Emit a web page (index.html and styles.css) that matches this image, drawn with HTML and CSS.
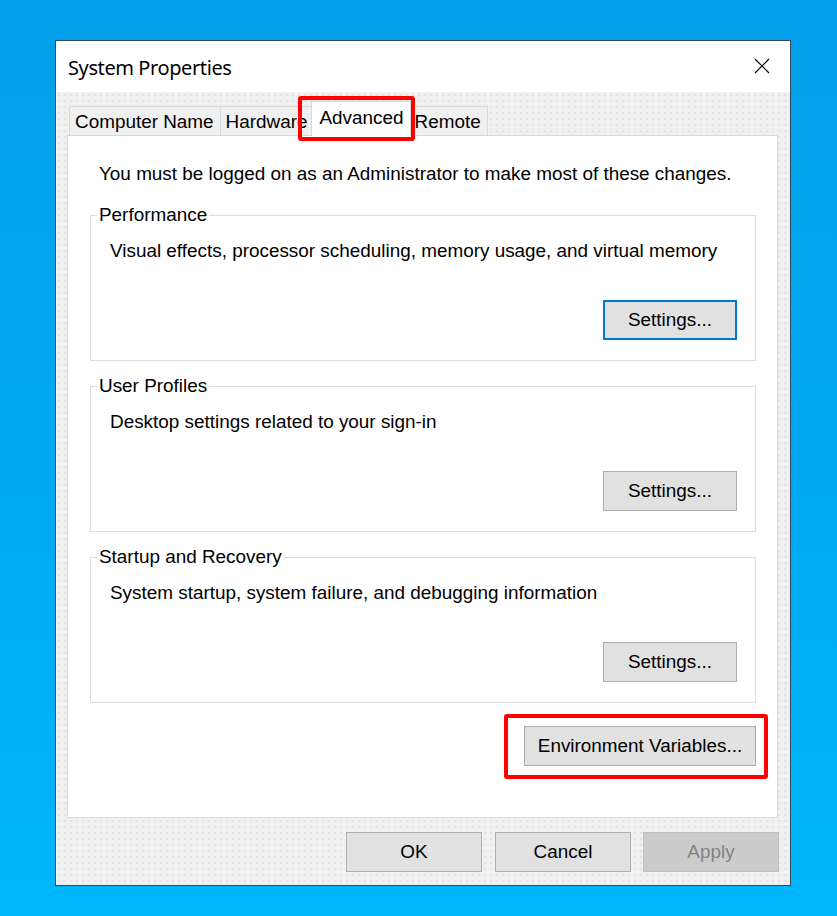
FILE: index.html
```html
<!DOCTYPE html>
<html lang="en">
<head>
<meta charset="utf-8">
<title>System Properties</title>
<link rel="stylesheet" href="styles.css">
</head>
<body>
<div class="desktop">
  <div class="dialog">
    <div class="titlebar">
      <span class="title">System Properties</span>
      <span class="close">
        <svg width="16" height="16" viewBox="0 0 16 16"><path d="M1 1 L15 15 M15 1 L1 15" stroke="#000" stroke-width="1.1" fill="none"/></svg>
      </span>
    </div>
    <div class="body">
      <div class="tabs">
        <div class="tab">Computer Name</div>
        <div class="tab">Hardware</div>
        <div class="tab active">Advanced<span class="mark mark-tab"></span></div>
        <div class="tab">Remote</div>
      </div>
      <div class="panel">
        <p class="notice">You must be logged on as an Administrator to make most of these changes.</p>
        <fieldset class="group">
          <legend>Performance</legend>
          <p class="desc">Visual effects, processor scheduling, memory usage, and virtual memory</p>
          <button class="btn focus">Settings...</button>
        </fieldset>
        <fieldset class="group">
          <legend>User Profiles</legend>
          <p class="desc">Desktop settings related to your sign-in</p>
          <button class="btn">Settings...</button>
        </fieldset>
        <fieldset class="group">
          <legend>Startup and Recovery</legend>
          <p class="desc">System startup, system failure, and debugging information</p>
          <button class="btn">Settings...</button>
        </fieldset>
        <div class="env-wrap">
          <button class="btn env">Environment Variables...</button>
          <span class="mark mark-env"></span>
        </div>
      </div>
      <div class="footer">
        <button class="btn wide ok">OK</button>
        <button class="btn wide">Cancel</button>
        <button class="btn wide disabled">Apply</button>
      </div>
    </div>
  </div>
</div>
</body>
</html>
```
FILE: styles.css
```css
* { box-sizing: border-box; }
html, body { margin: 0; padding: 0; }
body {
  width: 837px;
  height: 916px;
  overflow: hidden;
  font-family: "Liberation Sans", Arial, sans-serif;
  font-size: 18.9px;
  color: #000;
}
.desktop {
  width: 837px;
  height: 916px;
  background: linear-gradient(180deg, #00a0ea 0%, #00a9f2 50%, #00b7fc 100%);
  padding: 40px 0 0 55px;
}
.dialog {
  width: 736px;
  height: 846px;
  border: 1px solid #2a4a63;
  background: #f0f0f0;
  display: flex;
  flex-direction: column;
}
.titlebar {
  height: 51px;
  background: #fff;
  display: flex;
  align-items: center;
  justify-content: space-between;
  padding: 2px 20px 0 12px;
}
.title {
  font-family: "Noto Sans", "Open Sans", sans-serif;
  font-size: 20px;
  letter-spacing: -0.4px;
  color: #000;
}
.close { display: flex; width: 16px; height: 16px; margin-top: -3px; }
.body {
  flex: 1;
  background-color: #f0f0f0;
  background-image: radial-gradient(circle, #e2e2e2 0.7px, transparent 1px);
  background-size: 6px 6px;
  padding: 10px 11px 0 11px;
  display: flex;
  flex-direction: column;
}
.tabs {
  display: flex;
  align-items: flex-end;
  height: 33px;
  padding-left: 2px;
  position: relative;
  z-index: 2;
}
.tab {
  height: 29px;
  border: 1px solid #d9d9d9;
  border-bottom: none;
  background: #f0f0f0;
  padding: 4px 6px 0 5px;
  line-height: 22px;
  margin-right: -1px;
  white-space: nowrap;
}
.tab.active {
  position: relative;
  height: 35px;
  margin: 0 -2px -1px -2px;
  padding: 5px 6px 0 7px;
  background: #fff;
  z-index: 1;
}
.mark {
  position: absolute;
  border: 4px solid #ff0000;
  border-radius: 3px;
  pointer-events: none;
}
.mark-tab { left: -14px; right: -5px; top: -6px; height: 45px; }
.panel {
  width: 711px;
  height: 683px;
  background: #fff;
  border: 1px solid #d9d9d9;
  padding: 27px 21px 0 22px;
  display: flex;
  flex-direction: column;
}
.notice {
  margin: 0 0 19px 9px;
  line-height: 22px;
}
.group {
  margin: 0 0 14px 0;
  border: 1px solid #dcdcdc;
  padding: 0 18px 20px 19px;
  display: flex;
  flex-direction: column;
  min-width: 0;
}
.group legend {
  margin-left: -13px;
  padding: 0 2px;
  line-height: 22px;
}
.desc {
  margin: 14px 0 38px 0;
  line-height: 22px;
}
.btn {
  font-family: "Liberation Sans", Arial, sans-serif;
  font-size: 18.9px;
  color: #000;
  background: #e1e1e1;
  border: 1px solid #adadad;
  height: 40px;
  width: 134px;
  padding: 0;
  align-self: flex-end;
}
.btn.focus { border: 2px solid #0078d7; }
.env-wrap {
  position: relative;
  align-self: flex-end;
  margin-top: 9px;
  display: flex;
}
.btn.env { width: 232px; }
.mark-env { left: -20px; top: -12px; width: 264px; height: 65px; }
.footer {
  display: flex;
  justify-content: flex-end;
  gap: 12px;
  padding-top: 14px;
}
.btn.ok { margin-right: 1px; }
.btn.wide { width: 136px; }
.btn.disabled {
  background: #cccccc;
  border-color: #bfbfbf;
  color: #838383;
}
```
